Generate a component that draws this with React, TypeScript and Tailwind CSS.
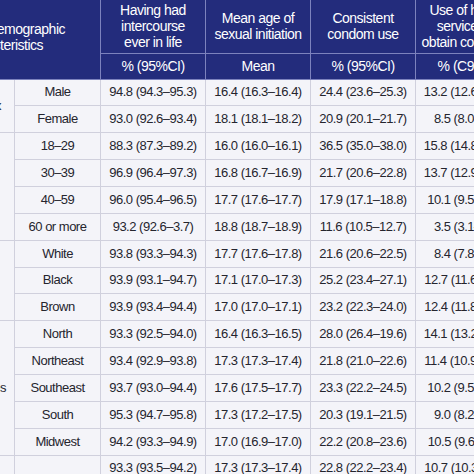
import React from "react";

type Row = {
  group?: { label: string; span: number; align: string };
  name: string;
  vals: string[];
};

const rows: Row[] = [
  { group: { label: "Sex", span: 2, align: "text-right pr-[13px]" }, name: "Male", vals: ["94.8 (94.3–95.3)", "16.4 (16.3–16.4)", "24.4 (23.6–25.3)", "13.2 (12.6–13.8)"] },
  { name: "Female", vals: ["93.0 (92.6–93.4)", "18.1 (18.1–18.2)", "20.9 (20.1–21.7)", "8.5 (8.0–9.0)"] },
  { group: { label: "Age", span: 4, align: "text-left pl-1" }, name: "18–29", vals: ["88.3 (87.3–89.2)", "16.0 (16.0–16.1)", "36.5 (35.0–38.0)", "15.8 (14.8–16.9)"] },
  { name: "30–39", vals: ["96.9 (96.4–97.3)", "16.8 (16.7–16.9)", "21.7 (20.6–22.8)", "13.7 (12.9–14.6)"] },
  { name: "40–59", vals: ["96.0 (95.4–96.5)", "17.7 (17.6–17.7)", "17.9 (17.1–18.8)", "10.1 (9.5–10.7)"] },
  { name: "60 or more", vals: ["93.2 (92.6–3.7)", "18.8 (18.7–18.9)", "11.6 (10.5–12.7)", "3.5 (3.1–3.9)"] },
  { group: { label: "Color", span: 3, align: "text-left pl-1" }, name: "White", vals: ["93.8 (93.3–94.3)", "17.7 (17.6–17.8)", "21.6 (20.6–22.5)", "8.4 (7.8–9.0)"] },
  { name: "Black", vals: ["93.9 (93.1–94.7)", "17.1 (17.0–17.3)", "25.2 (23.4–27.1)", "12.7 (11.6–13.9)"] },
  { name: "Brown", vals: ["93.9 (93.4–94.4)", "17.0 (17.0–17.1)", "23.2 (22.3–24.0)", "12.4 (11.8–13.1)"] },
  { group: { label: "Regions", span: 5, align: "text-right pr-[8px]" }, name: "North", vals: ["93.3 (92.5–94.0)", "16.4 (16.3–16.5)", "28.0 (26.4–19.6)", "14.1 (13.2–15.0)"] },
  { name: "Northeast", vals: ["93.4 (92.9–93.8)", "17.3 (17.3–17.4)", "21.8 (21.0–22.6)", "11.4 (10.9–12.0)"] },
  { name: "Southeast", vals: ["93.7 (93.0–94.4)", "17.6 (17.5–17.7)", "23.3 (22.2–24.5)", "10.2 (9.5–10.9)"] },
  { name: "South", vals: ["95.3 (94.7–95.8)", "17.3 (17.2–17.5)", "20.3 (19.1–21.5)", "9.0 (8.2–9.8)"] },
  { name: "Midwest", vals: ["94.2 (93.3–94.9)", "17.0 (16.9–17.0)", "22.2 (20.8–23.6)", "10.5 (9.6–11.4)"] },
  { group: { label: "Total", span: 1, align: "text-left pl-1" }, name: "", vals: ["93.3 (93.5–94.2)", "17.3 (17.3–17.4)", "22.8 (22.2–23.4)", "10.7 (10.3–11.2)"] },
];

const th = "border border-[#7c82bd] font-normal text-center align-middle whitespace-nowrap";
const td = "border border-[#d0d0dd] text-center align-middle whitespace-nowrap";

export default function App() {
  return (
    <div className="w-[474px] h-[474px] overflow-hidden bg-[#f4f4f9] font-['Liberation_Sans',Arial,sans-serif]">
      <table className="table-fixed border-collapse ml-[-56px] w-[575px] text-[13px] leading-[16px] tracking-[-0.5px] text-[#25252e]">
        <colgroup>
          <col className="w-[70px]" />
          <col className="w-[86px]" />
          <col className="w-[105px]" />
          <col className="w-[105px]" />
          <col className="w-[105px]" />
          <col className="w-[104px]" />
        </colgroup>
        <thead className="bg-[#232c7c] text-white text-[14px] tracking-[-0.5px]">
          <tr className="h-[53px]">
            <th colSpan={2} rowSpan={2} className={th + " border-t-0"}>
              <div className="flex flex-col items-end pb-1">
                <span className="pr-[35px]">Sociodemographic</span>
                <span className="pr-[57px]">characteristics</span>
              </div>
            </th>
            <th className={th + " border-t-0"}>
              Having had
              <br />
              intercourse
              <br />
              ever in life
            </th>
            <th className={th + " border-t-0"}>
              Mean age of
              <br />
              sexual initiation
            </th>
            <th className={th + " border-t-0"}>
              Consistent
              <br />
              condom use
            </th>
            <th className={th + " border-t-0"}>
              Use of health
              <br />
              services to
              <br />
              obtain condoms
            </th>
          </tr>
          <tr className="h-[26px]">
            <th className={th}>% (95%CI)</th>
            <th className={th}>Mean</th>
            <th className={th}>% (95%CI)</th>
            <th className={th}>% (C95%)</th>
          </tr>
        </thead>
        <tbody>
          {rows.map((r, i) => (
            <tr key={i} className="h-[26.86px]">
              {r.group && (
                <td rowSpan={r.group.span} className={`border border-[#d0d0dd] align-middle whitespace-nowrap ${r.group.align}`}>
                  {r.group.label}
                </td>
              )}
              <td className={td}>{r.name}</td>
              {r.vals.map((v, j) => (
                <td key={j} className={td}>
                  {v}
                </td>
              ))}
            </tr>
          ))}
        </tbody>
      </table>
    </div>
  );
}
